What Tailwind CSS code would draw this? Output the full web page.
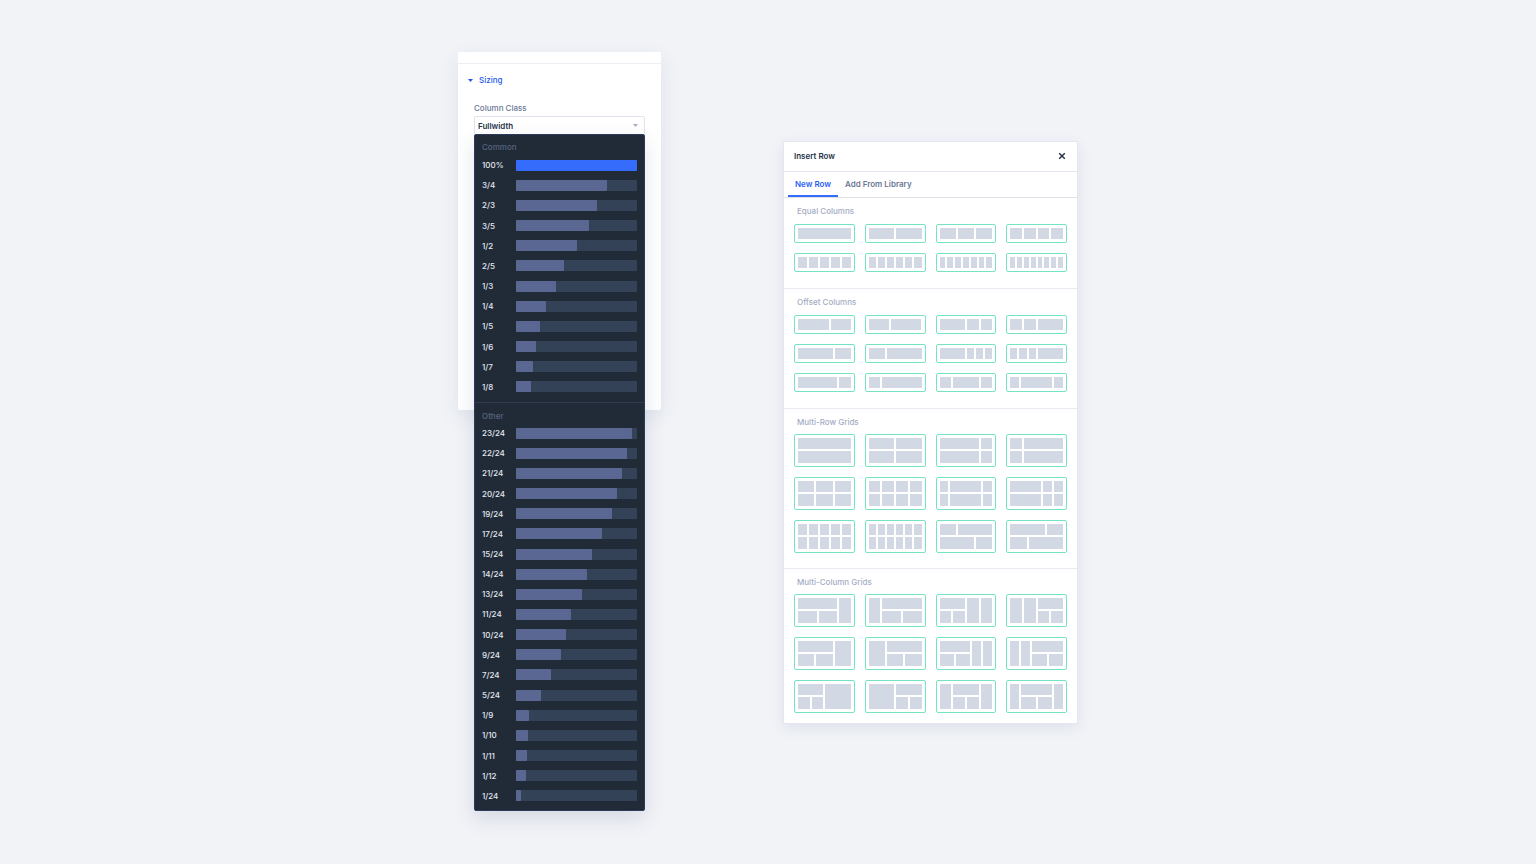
<!DOCTYPE html>
<html lang="en">
<head>
  <meta charset="UTF-8">
  <meta name="viewport" content="width=device-width, initial-scale=1.0">
  <title>Insert Row</title>
  <script src="https://cdn.jsdelivr.net/npm/@tailwindcss/browser@4"></script>
</head>
<body class="bg-[#f1f3f7] font-['Inter',sans-serif] text-[8px] leading-3 text-[#26324a]">

  <main class="flex min-h-screen items-start justify-center gap-[122px]">

    <!-- Column settings -->
    <section class="mt-[52px] h-[358px] w-[203px] rounded-xs bg-white shadow-[0_6px_20px_rgba(60,75,120,0.10)]">
      <div class="h-3 border-b border-[#eceef3]"></div>
      <div class="px-4 pt-[10px]">
        <button class="-ml-[6px] flex items-center gap-[6px] font-medium text-[#2258ee]">
          <svg class="h-[3px] w-[5px]" viewBox="0 0 5 3" fill="currentColor"><path d="M0 0h5L2.500 3z"/></svg>
          Sizing
        </button>

        <label for="column-class" class="mt-4 block font-medium text-[#6c7894]">Column Class</label>
        <div class="relative mt-[2px]">
          <select id="column-class" class="block h-5 w-full appearance-none rounded-xs border border-[#dfe3ed] bg-white px-[3px] font-semibold leading-3 text-[#26324a]">
            <option>Fullwidth</option>
          </select>
          <svg class="pointer-events-none absolute right-[7px] top-2 h-[3px] w-[5px] text-[#a4aec5]" viewBox="0 0 5 3" fill="currentColor"><path d="M0 0h5L2.500 3z"/></svg>

          <!-- Open menu -->
          <div class="absolute inset-x-0 top-[18px] rounded-xs border border-[#2d3a5c] bg-[#212b38] text-[#e3e7f1] shadow-[0_8px_20px_rgba(60,75,120,0.15)]">
            <h3 class="px-[7px] pt-[6px] pb-[2px] font-medium text-[#56647f]">Common</h3>
            <div id="common-sizes" class="flex min-h-[242px] flex-col px-[7px]"></div>
            <h3 class="mt-[5px] border-t border-[#303d51] px-[7px] pt-[7px] pb-px font-medium text-[#56647f]">Other</h3>
            <div id="other-sizes" class="mb-1 flex min-h-[383px] flex-col px-[7px]"></div>
          </div>
        </div>
      </div>
    </section>

    <!-- Insert row dialog -->
    <section class="w-[295px] self-center rounded-xs border border-[#e4e7ef] bg-white shadow-[0_4px_14px_rgba(60,75,120,0.10)]">
      <header class="flex h-[30px] items-center justify-between border-b border-[#e4e7ef] px-[10px]">
        <h2 class="font-semibold">Insert Row</h2>
        <button class="p-px" aria-label="Close">
          <svg class="size-2" viewBox="0 0 8 8" fill="none" stroke="currentColor" stroke-width="1.500"><path d="M1.200 1.200l5.600 5.600M6.800 1.200L1.200 6.800"/></svg>
        </button>
      </header>
      <nav class="flex h-[26px] border-b border-[#dde1ea] px-1">
        <a href="#new" class="border-b-2 border-[#356cfb] px-[7px] pt-[6px] font-semibold text-[#2b62f5]">New Row</a>
        <a href="#library" class="px-[7px] pt-[6px] font-semibold text-[#6c7894]">Add From Library</a>
      </nav>
      <div id="layouts"></div>
    </section>
  </main>

<script>
  const commonSizes = ['100%', '3/4', '2/3', '3/5', '1/2', '2/5', '1/3', '1/4', '1/5', '1/6', '1/7', '1/8'];
  const otherSizes = ['23/24', '22/24', '21/24', '20/24', '19/24', '17/24', '15/24', '14/24', '13/24', '11/24',
    '10/24', '9/24', '7/24', '5/24', '1/9', '1/10', '1/11', '1/12', '1/24'];

  // Each layout is "columns: spans", a "t" marks a cell two rows tall
  const groups = [
    { title: 'Equal Columns', rows: 1, pad: 'pb-4', layouts: [
      '1: 1', '2: 1 1', '3: 1 1 1', '4: 1 1 1 1',
      '5: 1 1 1 1 1', '6: 1 1 1 1 1 1', '7: 1 1 1 1 1 1 1', '8: 1 1 1 1 1 1 1 1'] },
    { title: 'Offset Columns', rows: 1, pad: 'pb-4', layouts: [
      '5: 3 2', '5: 2 3', '4: 2 1 1', '4: 1 1 2',
      '3: 2 1', '3: 1 2', '6: 3 1 1 1', '6: 1 1 1 3',
      '4: 3 1', '4: 1 3', '4: 1 2 1', '5: 1 3 1'] },
    { title: 'Multi-Row Grids', rows: 2, pad: 'pb-[15px]', layouts: [
      '1: 1 1', '2: 1 1 1 1', '4: 3 1 3 1', '4: 1 3 1 3',
      '3: 1 1 1 1 1 1', '4: 1 1 1 1 1 1 1 1', '5: 1 3 1 1 3 1', '5: 3 1 1 3 1 1',
      '5: 1 1 1 1 1 1 1 1 1 1', '6: 1 1 1 1 1 1 1 1 1 1 1 1', '3: 1 2 2 1', '3: 2 1 1 2'] },
    { title: 'Multi-Column Grids', rows: 2, pad: 'pb-[10px]', layouts: [
      '8: 6 2t 3 3', '8: 2t 6 3 3', '4: 2 1t 1t 1 1', '4: 1t 1t 2 1 1',
      '3: 2 1t 1 1', '3: 1t 2 1 1', '10: 6 2t 2t 3 3', '10: 2t 2t 6 3 3',
      '4: 2 2t 1 1', '4: 2t 2 1 1', '4: 1t 2 1t 1 1', '10: 2t 6 2t 3 3'] }
  ];

  function sizeRow(size) {
    const [top, bottom] = size.split('/').map(parseFloat);
    const width = bottom ? top / bottom * 100 : top;
    const color = width === 100 ? 'bg-[#356cfb]' : 'bg-[#5a6793]';
    return `
      <button class="flex flex-1 items-center text-left font-medium">
        <span class="w-[34px]">${size}</span>
        <span class="h-[11px] flex-1 rounded-[1px] bg-[#344258]">
          <span class="block h-full rounded-[1px] ${color}" style="width: ${width}%"></span>
        </span>
      </button>`;
  }

  function layoutTile(layout, rows) {
    const [cols, spans] = layout.split(': ');
    const cells = spans.split(' ').map(span => `
      <span class="bg-[#d2d8e4]" style="grid-column: span ${parseInt(span)}; grid-row: span ${span.endsWith('t') ? 2 : 1}"></span>`);
    return `
      <button class="grid ${rows === 2 ? 'h-[33px]' : 'h-[19px]'} gap-[2px] rounded-xs border border-[#74e4c5] p-[3px]"
        style="grid-template-columns: repeat(${cols}, minmax(0, 1fr)); grid-template-rows: repeat(${rows}, minmax(0, 1fr))"
        aria-label="Columns ${spans}">${cells.join('')}</button>`;
  }

  document.getElementById('common-sizes').innerHTML = commonSizes.map(sizeRow).join('');
  document.getElementById('other-sizes').innerHTML = otherSizes.map(sizeRow).join('');
  document.getElementById('layouts').innerHTML = groups.map(group => `
    <div class="border-b border-[#e8ebf1] px-[10px] pt-[7px] last:border-b-0 ${group.pad}">
      <h3 class="${group.rows === 2 ? 'mb-[6px]' : 'mb-[7px]'} px-[3px] font-medium text-[#a3adc4]">${group.title}</h3>
      <div class="grid grid-cols-4 gap-[10px]">
        ${group.layouts.map(layout => layoutTile(layout, group.rows)).join('')}
      </div>
    </div>`).join('');
</script>
</body>
</html>
